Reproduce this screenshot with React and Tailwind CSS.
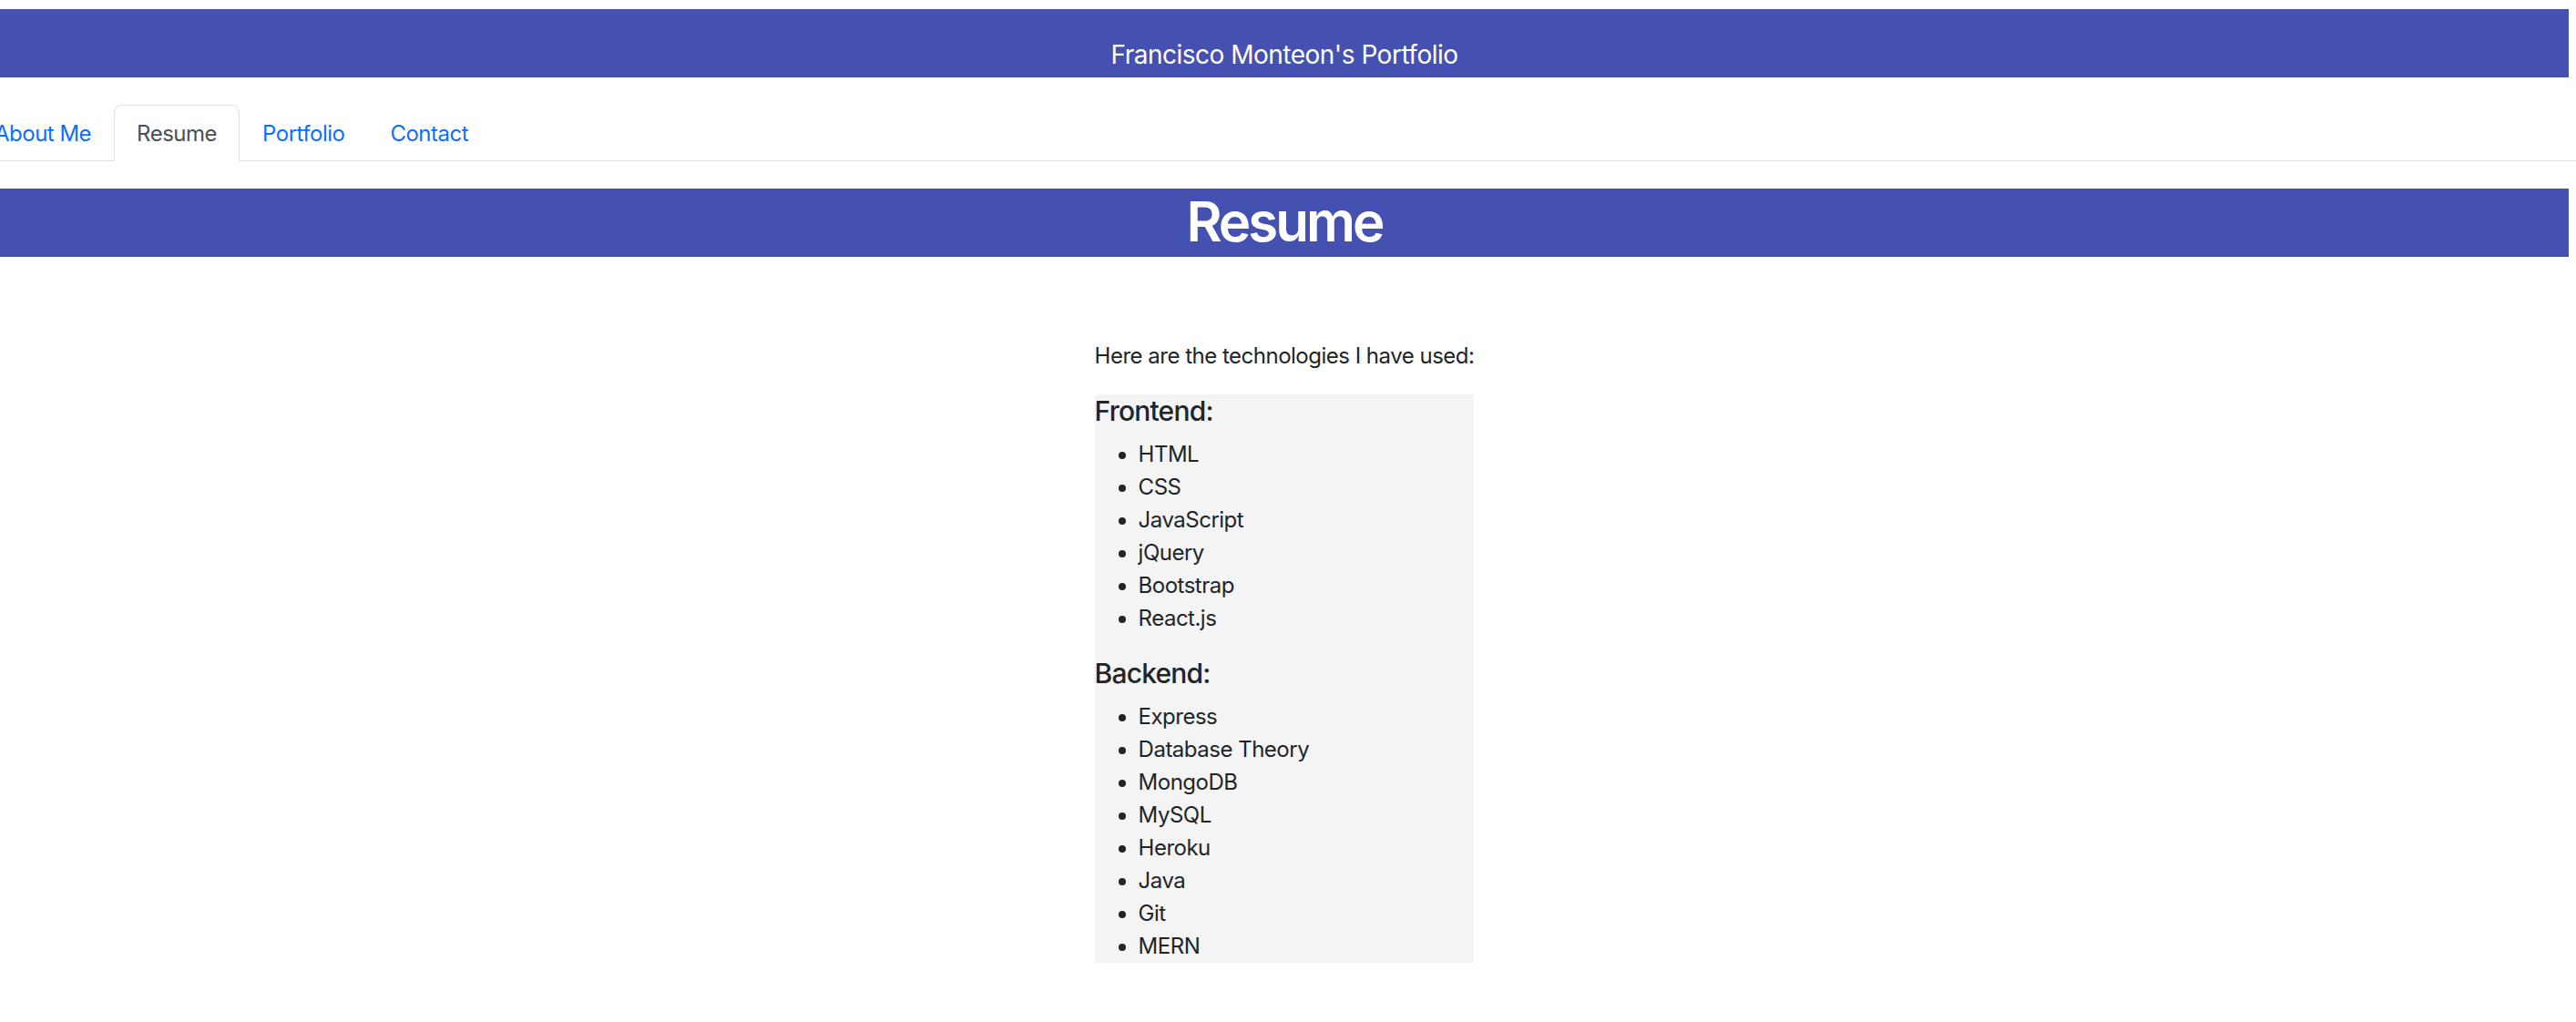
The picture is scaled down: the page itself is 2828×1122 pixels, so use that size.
const tabs = ['About Me', 'Resume', 'Portfolio', 'Contact'];

const frontend = ['HTML', 'CSS', 'JavaScript', 'jQuery', 'Bootstrap', 'React.js'];
const backend = ['Express', 'Database Theory', 'MongoDB', 'MySQL', 'Heroku', 'Java', 'Git', 'MERN'];

const SkillList = ({ title, items, last }) => {
  return (
    <>
      <h5 className="text-[30px] leading-[36px] font-medium tracking-[-0.8px] mb-[12px]">{title}</h5>
      <ul className={`list-disc pl-[48px] ${last ? 'mb-0' : 'mb-[24px]'}`}>
        {items.map((item) => (
          <li key={item}>{item}</li>
        ))}
      </ul>
    </>
  );
};

const App = () => {
  return (
    <div className="min-h-screen bg-white text-[#212529] text-[24px] leading-[36px] tracking-[-0.5px] font-['Inter','Liberation_Sans',sans-serif]">
      <header className="mt-[10px] mr-[8px] h-[75px] pb-[7px] flex items-end justify-center bg-[#4451b0]">
        <h1 className="text-[28px] leading-[36px] font-normal tracking-[-0.5px] text-white">Francisco Monteon's Portfolio</h1>
      </header>

      <nav className="mt-[30px] border-b border-[#dee2e6]">
        <ul className="flex -ml-[31px]">
          {tabs.map((tab) => {
            const active = tab === 'Resume';
            return (
              <li key={tab} className="-mb-px">
                <a
                  href="#"
                  className={
                    active
                      ? 'block px-[24px] pt-[13px] pb-[11px] rounded-t-[9px] border border-[#dee2e6] border-b-white bg-white text-[#495057]'
                      : 'block px-[24px] pt-[13px] pb-[11px] rounded-t-[9px] border border-transparent text-[#0d6efd]'
                  }
                >
                  {tab}
                </a>
              </li>
            );
          })}
        </ul>
      </nav>

      <section className="mt-[30px] mr-[8px] h-[75px] bg-[#4451b0]">
        <h2 className="text-center text-[60px] leading-[72px] font-semibold tracking-[-3px] text-white">Resume</h2>
      </section>

      <main className="pt-[91px] mr-[8px] flex justify-center">
        <div className="w-fit">
          <p className="mb-[24px]">Here are the technologies I have used:</p>
          <div className="bg-[#f4f4f4]">
            <SkillList title="Frontend:" items={frontend} />
            <SkillList title="Backend:" items={backend} last />
          </div>
        </div>
      </main>
    </div>
  );
};

export default App;
